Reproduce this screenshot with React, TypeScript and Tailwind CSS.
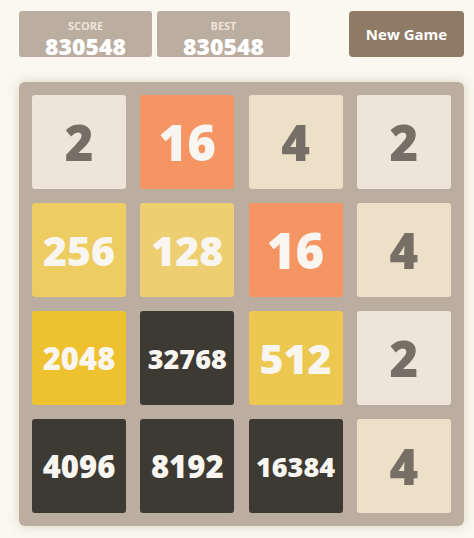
import React from 'react';

type Tile = { value: number };

const board: number[][] = [
  [2, 16, 4, 2],
  [256, 128, 16, 4],
  [2048, 32768, 512, 2],
  [4096, 8192, 16384, 4],
];

// background / text / font size for each tile value
const tileStyle = (value: number): string => {
  switch (value) {
    case 2:
      return 'bg-[#eee4da] text-[#776e65] text-[49px]';
    case 4:
      return 'bg-[#ede0c8] text-[#776e65] text-[49px]';
    case 16:
      return 'bg-[#f59563] text-[#f9f6f2] text-[49px]';
    case 128:
      return 'bg-[#edcf72] text-[#f9f6f2] text-[41px]';
    case 256:
      return 'bg-[#edcc61] text-[#f9f6f2] text-[41px]';
    case 512:
      return 'bg-[#edc850] text-[#f9f6f2] text-[41px]';
    case 2048:
      return 'bg-[#edc22e] text-[#f9f6f2] text-[31px]';
    case 4096:
    case 8192:
      return 'bg-[#3c3a32] text-[#f9f6f2] text-[31px]';
    default:
      return 'bg-[#3c3a32] text-[#f9f6f2] text-[27px]';
  }
};

const ScoreBox: React.FC<{ label: string; value: string }> = ({ label, value }) => (
  <div className="w-[133px] h-[46px] rounded-[3px] bg-[#bbada0] flex flex-col items-center pt-[10px]">
    <span className="text-[11px] leading-[10px] font-bold text-[#eee4da] uppercase">{label}</span>
    <span className="text-[23px] leading-[18px] font-extrabold text-white mt-[6px]">{value}</span>
  </div>
);

const TileCell: React.FC<Tile> = ({ value }) => (
  <div
    className={`w-[94px] h-[94px] rounded-[3px] flex items-center justify-center font-extrabold leading-none ${tileStyle(value)}`}
  >
    {value}
  </div>
);

export default function App() {
  return (
    <div
      className="w-[474px] h-[538px] bg-[#faf8ef] pl-[19px] pr-[10px] pt-[11px]"
      style={{ fontFamily: '"Open Sans", "Liberation Sans", sans-serif' }}
    >
      {/* Header */}
      <div className="flex items-center">
        <div className="flex gap-[5px]">
          <ScoreBox label="Score" value="830548" />
          <ScoreBox label="Best" value="830548" />
        </div>
        <button className="ml-auto w-[115px] h-[46px] rounded-[4px] bg-[#8f7a66] text-white text-[15px] font-bold">
          New Game
        </button>
      </div>

      {/* Board */}
      <div className="mt-[25px] w-[445px] p-[13px] rounded-[6px] bg-[#bbada0] shadow-[0_0_12px_rgba(160,140,110,0.35)]">
        <div className="grid grid-cols-4 gap-[14px]">
          {board.flat().map((v, i) => (
            <TileCell key={i} value={v} />
          ))}
        </div>
      </div>
    </div>
  );
}
